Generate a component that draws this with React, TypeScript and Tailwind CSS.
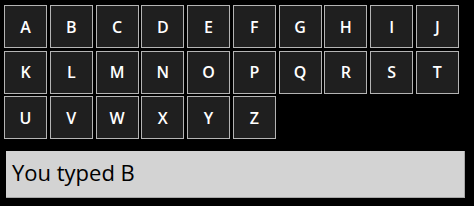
import React from "react";

const letters = "ABCDEFGHIJKLMNOPQRSTUVWXYZ".split("");

export default function App() {
  return (
    <div className="w-[474px] h-[206px] bg-black overflow-hidden pt-[5px] pl-[4px]" style={{ fontFamily: '"Open Sans", "Noto Sans", sans-serif' }}>
      <div className="grid grid-cols-[repeat(10,43px)] gap-x-[2.78px] gap-y-[2.7px]">
        {letters.map((l) => (
          <div
            key={l}
            className="w-[43px] h-[43px] bg-[#1f1f1f] border border-[#b4b4b4] flex items-center justify-center text-white text-[16px] font-semibold leading-none"
          >
            {l}
          </div>
        ))}
      </div>
      <div className="mt-[12px] ml-[2px] w-[459px] h-[47px] bg-[#d3d3d3] border-r border-b border-[#a8a8a8] flex items-center pl-[6px] pb-[4px] text-black text-[22px] leading-none">
        You typed B
      </div>
    </div>
  );
}
